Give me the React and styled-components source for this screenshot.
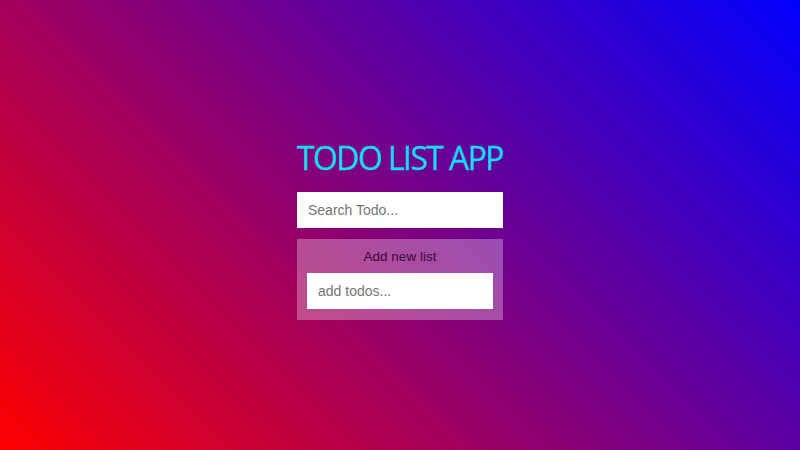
import React from "react";
import styled, { createGlobalStyle } from "styled-components";

const GlobalStyle = createGlobalStyle`
  html, body, #root {
    margin: 0;
    height: 100%;
  }
  body {
    font-family: "Liberation Sans", Arial, sans-serif;
  }
`;

const Page = styled.div`
  height: 100vh;
  display: flex;
  align-items: center;
  justify-content: center;
  background: linear-gradient(45deg, #ff0000, #0000ff);
`;

const Wrapper = styled.div`
  width: 206px;
  display: flex;
  flex-direction: column;
  margin-top: 6px;
`;

const Title = styled.h1`
  margin: 0 0 12px;
  font-family: "Open Sans", "Noto Sans", sans-serif;
  font-weight: 400;
  font-size: 32px;
  line-height: 44px;
  color: #14dcf3;
  text-align: center;
  white-space: nowrap;
  letter-spacing: -1.6px;
  -webkit-text-stroke: 0.3px #14dcf3;
`;

const Input = styled.input`
  box-sizing: border-box;
  width: 100%;
  height: 36px;
  border: none;
  outline: none;
  padding: 0 11px;
  font-family: "Liberation Sans", Arial, sans-serif;
  font-size: 14px;
  color: #333;
  background: #fff;
  &::placeholder {
    color: #757575;
  }
`;

const AddCard = styled.div`
  margin-top: 11px;
  padding: 10px 10px 11px;
  background: rgba(255, 255, 255, 0.3);
  display: flex;
  flex-direction: column;
`;

const CardLabel = styled.div`
  font-size: 13.5px;
  line-height: 16px;
  color: #3b0636;
  text-align: center;
  margin-bottom: 8px;
`;

export default function App() {
  return (
    <>
      <GlobalStyle />
      <Page>
        <Wrapper>
          <Title>TODO LIST APP</Title>
          <Input placeholder="Search Todo..." />
          <AddCard>
            <CardLabel>Add new list</CardLabel>
            <Input placeholder="add todos..." />
          </AddCard>
        </Wrapper>
      </Page>
    </>
  );
}
